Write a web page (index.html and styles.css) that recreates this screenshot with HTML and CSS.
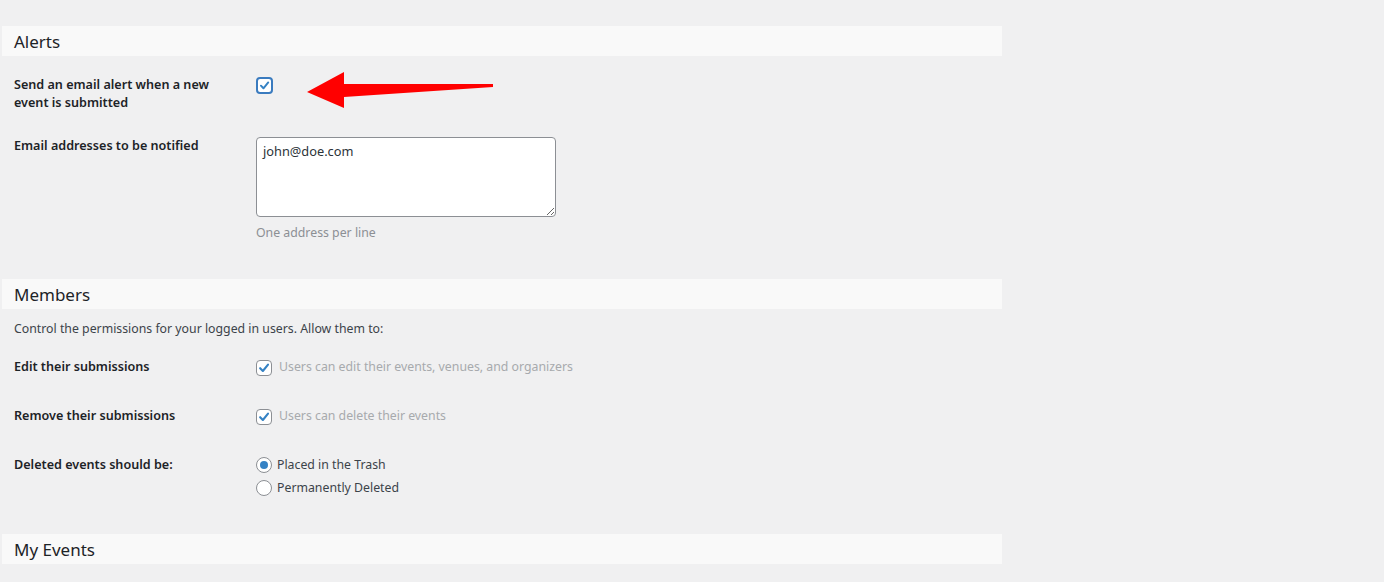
FILE: index.html
```html
<!DOCTYPE html>
<html lang="en">
<head>
<meta charset="utf-8">
<title>Settings</title>
<link rel="stylesheet" href="styles.css">
</head>
<body>
<div class="page">
  <section class="section">
    <h2 class="section-title">Alerts</h2>
    <div class="rows alerts-rows">
      <div class="row">
        <div class="label">Send an email alert when a new<br>event is submitted</div>
        <div class="field">
          <span class="checkbox focused"><svg viewBox="0 0 16 16"><path d="M3.6 8.2 L6.7 11.4 L12.6 4.2"/></svg></span>
        </div>
      </div>
      <div class="row">
        <div class="label">Email addresses to be notified</div>
        <div class="field">
          <textarea class="textarea" readonly>john@doe.com</textarea>
          <p class="description">One address per line</p>
        </div>
      </div>
    </div>
  </section>

  <section class="section members">
    <h2 class="section-title">Members</h2>
    <p class="intro">Control the permissions for your logged in users. Allow them to:</p>
    <div class="rows member-rows">
      <div class="row">
        <div class="label">Edit their submissions</div>
        <div class="field">
          <label class="check-line disabled"><span class="checkbox"><svg viewBox="0 0 16 16"><path d="M3.6 8.2 L6.7 11.4 L12.6 4.2"/></svg></span>Users can edit their events, venues, and organizers</label>
        </div>
      </div>
      <div class="row">
        <div class="label">Remove their submissions</div>
        <div class="field">
          <label class="check-line disabled"><span class="checkbox"><svg viewBox="0 0 16 16"><path d="M3.6 8.2 L6.7 11.4 L12.6 4.2"/></svg></span>Users can delete their events</label>
        </div>
      </div>
      <div class="row">
        <div class="label">Deleted events should be:</div>
        <div class="field radios">
          <label class="radio-line"><span class="radio checked"></span>Placed in the Trash</label>
          <label class="radio-line"><span class="radio"></span>Permanently Deleted</label>
        </div>
      </div>
    </div>
  </section>

  <section class="section">
    <h2 class="section-title">My Events</h2>
  </section>

  <svg class="annotation-arrow" viewBox="0 0 200 40" width="200" height="40">
    <polygon points="0,20 37,0 37,12 186,12 186,15 37,25 37,36" fill="#ff0000"/>
  </svg>
</div>
</body>
</html>
```

FILE: styles.css
```css
html, body {
  margin: 0;
  padding: 0;
  background: #f0f0f1;
}

body {
  font-family: "Noto Sans", "Open Sans", sans-serif;
  font-size: 12.3px;
  color: #1d2327;
  height: 582px;
  overflow: hidden;
}

.page {
  position: relative;
  width: 1000px;
  padding: 26px 0 0 2px;
}

.section-title {
  margin: 0;
  height: 30px;
  padding: 0 12px;
  display: flex;
  align-items: center;
  background: #f9f9f9;
  font-size: 17px;
  font-weight: 400;
  color: #1d2327;
}

.rows {
  padding-left: 12px;
}

.row {
  display: flex;
}

.label {
  width: 242px;
  flex: none;
  font-size: 12.6px;
  font-weight: 600;
  line-height: 18px;
  color: #1d2327;
}

.field {
  flex: 1;
}

.alerts-rows {
  padding-top: 20px;
  padding-bottom: 37px;
}

.alerts-rows .row + .row {
  margin-top: 25px;
}

.checkbox {
  display: inline-flex;
  width: 16px;
  height: 16px;
  box-sizing: border-box;
  border: 1px solid #8c8f94;
  border-radius: 4px;
  background: #fff;
  flex: none;
}

.checkbox svg {
  width: 100%;
  height: 100%;
}

.checkbox path {
  fill: none;
  stroke: #3582c4;
  stroke-width: 2.4;
  stroke-linecap: round;
  stroke-linejoin: round;
}

.checkbox.focused {
  width: 17px;
  height: 17px;
  margin-top: 1px;
  border: 2px solid #3a7bbf;
  border-radius: 4px;
}

.textarea {
  display: block;
  box-sizing: border-box;
  width: 300px;
  height: 80px;
  margin: 0;
  padding: 4px 6px;
  border: 1px solid #8c8f94;
  border-radius: 4px;
  background: #fff;
  font-family: "Noto Sans", "Open Sans", sans-serif;
  font-size: 12.8px;
  line-height: 18px;
  color: #2c3338;
  resize: vertical;
  outline: none;
}

.description {
  margin: 7px 0 0;
  line-height: 18px;
  color: #8c8f94;
}

.intro {
  margin: 11px 0 0;
  padding-left: 12px;
  line-height: 18px;
  color: #3c434a;
}

.member-rows {
  padding-top: 20px;
  padding-bottom: 37px;
}

.member-rows .row + .row {
  margin-top: 31px;
}

.check-line {
  display: flex;
  align-items: flex-start;
  gap: 7px;
  line-height: 18px;
}

.check-line .checkbox {
  margin-top: 2px;
}

.check-line.disabled {
  color: #a7aaad;
}

.radios {
  display: flex;
  flex-direction: column;
  gap: 5px;
}

.radio-line {
  display: flex;
  align-items: center;
  gap: 5px;
  line-height: 18px;
  color: #3c434a;
}

.radio {
  position: relative;
  width: 16px;
  height: 16px;
  box-sizing: border-box;
  border: 1px solid #8c8f94;
  border-radius: 50%;
  background: #fff;
  flex: none;
}

.radio.checked::after {
  content: "";
  position: absolute;
  left: 3px;
  top: 3px;
  width: 8px;
  height: 8px;
  border-radius: 50%;
  background: #3582c4;
}

.annotation-arrow {
  position: absolute;
  left: 307px;
  top: 72px;
}
```
